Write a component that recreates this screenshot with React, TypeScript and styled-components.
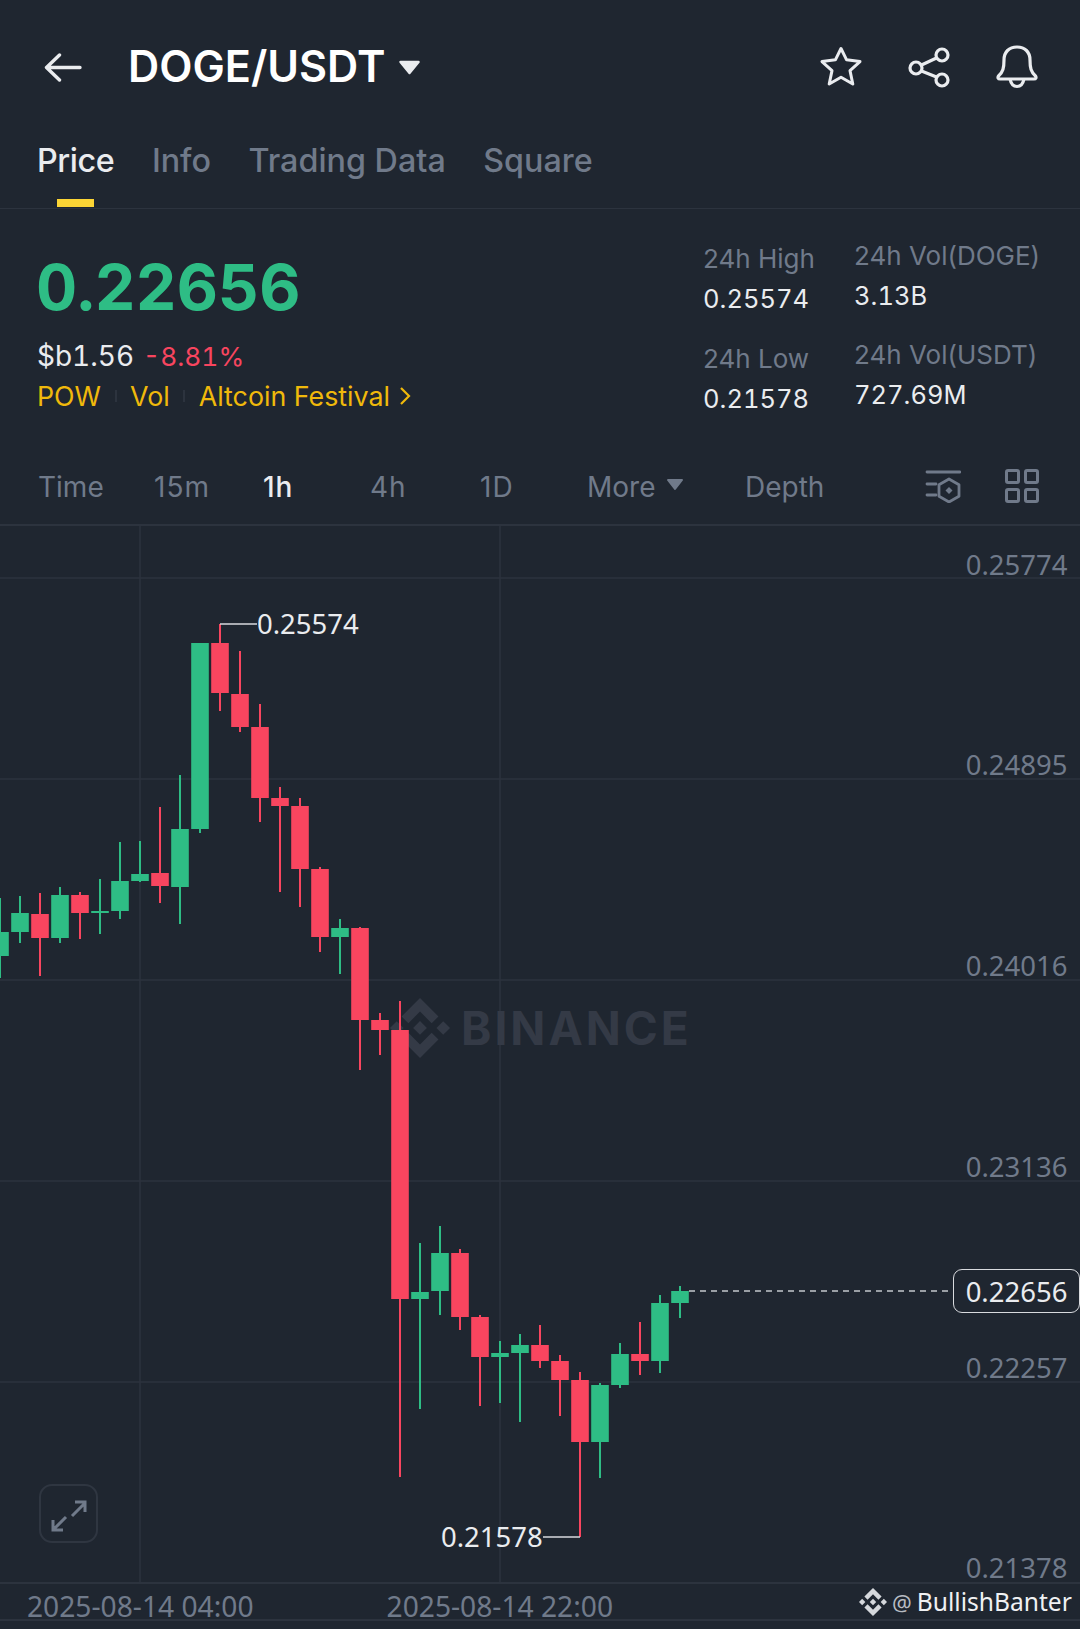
import styled, { createGlobalStyle } from 'styled-components';

const BG = '#1f2630';
const GREEN = '#2ebd85';
const RED = '#f8455f';
const MUTED = '#707a8a';
const LINE = '#2c333e';
const CHART_TOP = 526;

// x, up, high, top, bottom, low (page pixels)
const candles: [number, boolean, number, number, number, number][] = [
  [0, true, 898, 932, 956, 978],
  [20, true, 896, 913, 932, 943],
  [40, false, 893, 914, 938, 976],
  [60, true, 887, 895, 938, 943],
  [80, false, 892, 895, 913, 939],
  [100, true, 879, 911, 913, 934],
  [120, true, 842, 881, 911, 919],
  [140, true, 841, 874, 881, 882],
  [160, false, 807, 873, 886, 903],
  [180, true, 775, 829, 887, 924],
  [200, true, 643, 643, 829, 833],
  [220, false, 624, 643, 693, 711],
  [240, false, 651, 694, 727, 732],
  [260, false, 704, 727, 798, 822],
  [280, false, 787, 798, 806, 892],
  [300, false, 798, 806, 869, 907],
  [320, false, 867, 869, 937, 952],
  [340, true, 919, 928, 937, 974],
  [360, false, 927, 928, 1020, 1070],
  [380, false, 1013, 1020, 1030, 1055],
  [400, false, 1001, 1030, 1299, 1477],
  [420, true, 1243, 1292, 1299, 1409],
  [440, true, 1226, 1253, 1291, 1315],
  [460, false, 1249, 1253, 1317, 1330],
  [480, false, 1315, 1317, 1357, 1406],
  [500, true, 1341, 1353, 1357, 1403],
  [520, true, 1334, 1345, 1353, 1422],
  [540, false, 1325, 1345, 1361, 1368],
  [560, false, 1355, 1361, 1380, 1416],
  [580, false, 1372, 1380, 1442, 1537],
  [600, true, 1383, 1385, 1442, 1478],
  [620, true, 1343, 1354, 1385, 1388],
  [640, false, 1322, 1354, 1361, 1375],
  [660, true, 1295, 1303, 1361, 1373],
  [680, true, 1286, 1291, 1303, 1318],
];

const gridRows = [
  { y: 578, label: '0.25774', labelY: 564 },
  { y: 779, label: '0.24895', labelY: 764 },
  { y: 980, label: '0.24016', labelY: 965 },
  { y: 1181, label: '0.23136', labelY: 1166 },
  { y: 1382, label: '0.22257', labelY: 1367 },
];

const LOGO_PATHS = [
  'M38.73 53.2l24.59-24.58 24.6 24.6 14.3-14.31L63.32 0 24.42 38.9z',
  'M0 63.31l14.3-14.31 14.31 14.31-14.31 14.3z',
  'M38.73 73.41l24.59 24.59 24.6-24.6 14.31 14.29-38.9 38.91-38.91-38.88z',
  'M98 63.31l14.3-14.31 14.31 14.31-14.31 14.3z',
  'M77.83 63.3L63.32 48.78 48.81 63.28l14.51 14.5 14.51-14.47z',
];

function BinanceMark({ size, color }: { size: number; color: string }) {
  return (
    <svg width={size} height={size} viewBox="0 0 126.61 126.61" fill={color}>
      {LOGO_PATHS.map((d) => (
        <path key={d} d={d} />
      ))}
    </svg>
  );
}

function Chart() {
  const py = (y: number) => y - CHART_TOP;
  return (
    <ChartSvg viewBox="0 0 1080 1056" width={1080} height={1056}>
      {gridRows.map((row) => (
        <line key={row.y} x1={0} x2={1080} y1={py(row.y)} y2={py(row.y)} stroke={LINE} strokeWidth={1.5} />
      ))}
      <line x1={140} x2={140} y1={0} y2={1056} stroke={LINE} strokeWidth={1.5} />
      <line x1={500} x2={500} y1={0} y2={1056} stroke={LINE} strokeWidth={1.5} />

      <g transform={`translate(390 ${py(998)})`}>
        <svg width={60} height={60} viewBox="0 0 126.61 126.61" fill="#343a46">
          {LOGO_PATHS.map((d) => (
            <path key={d} d={d} />
          ))}
        </svg>
      </g>
      <Watermark x={461} y={py(1045)}>BINANCE</Watermark>

      {candles.map(([x, up, high, top, bottom, low]) => {
        const color = up ? GREEN : RED;
        return (
          <g key={x} fill={color}>
            <rect x={x - 1} y={py(high)} width={2} height={low - high} />
            <rect x={x - 8.8} y={py(top)} width={17.6} height={bottom - top} />
          </g>
        );
      })}

      <path d={`M220 ${py(624)}H257`} stroke="#d8dade" strokeWidth={1.5} fill="none" />
      <PriceMark x={257} y={py(624) + 10}>0.25574</PriceMark>
      <path d={`M580 ${py(1537)}H543`} stroke="#d8dade" strokeWidth={1.5} fill="none" />
      <PriceMark x={441} y={py(1537) + 10}>0.21578</PriceMark>

      {gridRows.map((row) => (
        <AxisLabel key={row.label} x={1067.5} y={py(row.labelY) + 10.5} textAnchor="end">
          {row.label}
        </AxisLabel>
      ))}
      <AxisLabel x={1067.5} y={py(1567) + 10.5} textAnchor="end">0.21378</AxisLabel>

      <line x1={689} x2={953} y1={py(1291)} y2={py(1291)} stroke="#c4c7cc" strokeWidth={1.5} strokeDasharray="6 5" />
    </ChartSvg>
  );
}

export default function App() {
  return (
    <Page>
      <GlobalStyle />
      <Header>
        <BackIcon width={40} height={30} viewBox="0 0 40 30" fill="none">
          <path d="M37 14.5H4M16.5 2 3.5 14.5 16.5 27" stroke="#eaecef" strokeWidth={3.4} strokeLinecap="round" strokeLinejoin="round" />
        </BackIcon>
        <Title>DOGE/USDT</Title>
        <TitleCaret width={23} height={15} viewBox="0 0 23 15">
          <path d="M2.5 2h18L11.5 13z" fill="#eaecef" stroke="#eaecef" strokeWidth={2.5} strokeLinejoin="round" />
        </TitleCaret>
        <HeaderIcons>
          <svg width={44} height={42} viewBox="0 0 44 42" fill="none" stroke="#eaecef" strokeWidth={3} strokeLinejoin="round">
            <path d="M22 2.5 27.6 13.8 41 15.6 31 24.6 33.8 38 22 31.3 10.2 38 13 24.6 3 15.6 16.4 13.8Z" />
          </svg>
          <svg width={44} height={44} viewBox="0 0 44 44" fill="none" stroke="#eaecef" strokeWidth={3.2}>
            <circle cx={9} cy={23} r={6} />
            <circle cx={35} cy={10} r={6} />
            <circle cx={35} cy={35} r={6} />
            <path d="M14.5 20 29.5 13M14.5 26 29.5 32" />
          </svg>
          <svg width={44} height={46} viewBox="0 0 44 46" fill="none" stroke="#eaecef" strokeWidth={3.2} strokeLinejoin="round">
            <path d="M3.5 32C8 28 9 24 9 16 9 8 14 3 22 3s13 5 13 13c0 8 1 12 5.500 16 1 1.500.5 3-1.500 3H5c-2 0-2.500-1.500-1.500-3Z" />
            <path d="M15 35c1 5 4 7.500 7 7.500s6-2.500 7-7.500" />
          </svg>
        </HeaderIcons>
      </Header>

      <Tabs>
        <Tab $active>Price</Tab>
        <Tab>Info</Tab>
        <Tab>Trading Data</Tab>
        <Tab>Square</Tab>
      </Tabs>

      <Stats>
        <Summary>
          <LastPrice>0.22656</LastPrice>
          <ChangeRow>
            <Fiat>$b1.56</Fiat>
            <Change>-8.81%</Change>
          </ChangeRow>
          <TagRow>
            <span>POW</span>
            <TagDivider />
            <span>Vol</span>
            <TagDivider />
            <span>Altcoin Festival</span>
            <svg width={12} height={20} viewBox="0 0 12 20" fill="none" stroke="#f0b90b" strokeWidth={2.2}>
              <path d="M2 2l8 8-8 8" />
            </svg>
          </TagRow>
        </Summary>
        <StatColumn $left={703} $top={34} $gap={28}>
          <StatPair>
            <StatLabel>24h High</StatLabel>
            <StatValue>0.25574</StatValue>
          </StatPair>
          <StatPair>
            <StatLabel>24h Low</StatLabel>
            <StatValue>0.21578</StatValue>
          </StatPair>
        </StatColumn>
        <StatColumn $left={854} $top={31} $gap={27}>
          <StatPair>
            <StatLabel>24h Vol(DOGE)</StatLabel>
            <StatValue>3.13B</StatValue>
          </StatPair>
          <StatPair>
            <StatLabel>24h Vol(USDT)</StatLabel>
            <StatValue>727.69M</StatValue>
          </StatPair>
        </StatColumn>
      </Stats>

      <Toolbar>
        <Interval>Time</Interval>
        <Interval $numeric>15m</Interval>
        <Interval $numeric $active>1h</Interval>
        <Interval $numeric>4h</Interval>
        <Interval $numeric>1D</Interval>
        <Interval>
          More
          <MoreCaret width={18} height={13} viewBox="0 0 18 13">
            <path d="M2 2h14L9 11z" fill={MUTED} stroke={MUTED} strokeWidth={2} strokeLinejoin="round" />
          </MoreCaret>
        </Interval>
        <Interval>Depth</Interval>
        <ToolIcon width={36} height={34} viewBox="0 0 36 34" fill="none" stroke={MUTED} strokeWidth={2.8} strokeLinecap="round">
          <path d="M2 3h33M2 15h9M2 26h9" />
          <path d="M24 10l10 5.700v11.600L24 33 14 27.300V15.700Z" strokeLinejoin="round" />
          <path d="M24 18l3.500 3.500-3.500 3.500-3.500-3.500Z" fill={MUTED} stroke="none" />
        </ToolIcon>
        <ToolIcon width={34} height={34} viewBox="0 0 34 34" fill="none" stroke={MUTED} strokeWidth={3}>
          <rect x={1.5} y={1.5} width={12} height={12} rx={1.5} />
          <rect x={20.500} y={1.5} width={12} height={12} rx={1.5} />
          <rect x={1.5} y={20.500} width={12} height={12} rx={1.5} />
          <rect x={20.500} y={20.500} width={12} height={12} rx={1.5} />
        </ToolIcon>
      </Toolbar>

      <ChartArea>
        <Chart />
        <CurrentPrice>0.22656</CurrentPrice>
        <ExpandButton>
          <svg width={40} height={40} viewBox="0 0 40 40" fill="none" stroke={MUTED} strokeWidth={3}>
            <path d="M23 22 36 9M26 8h10v10M17 23 4 36M4 26v10h10" />
          </svg>
        </ExpandButton>
      </ChartArea>

      <TimeAxis>
        <span>2025-08-14 04:00</span>
        <span>2025-08-14 22:00</span>
        <Credit>
          <BinanceMark size={28} color="#d5d8dc" />
          <CreditAt>@</CreditAt>
          <span>BullishBanter</span>
        </Credit>
      </TimeAxis>
    </Page>
  );
}

const GlobalStyle = createGlobalStyle`
  html, body {
    margin: 0;
    padding: 0;
    background: ${BG};
  }
`;

const Page = styled.div`
  width: 1080px;
  height: 1629px;
  overflow: hidden;
  background: ${BG};
  font-family: Inter, 'Noto Sans', sans-serif;
  color: #eaecef;
`;

const Header = styled.header`
  height: 134px;
  padding-left: 43px;
  display: flex;
  align-items: center;
  box-sizing: border-box;
`;

const BackIcon = styled.svg`
  margin: 2px 45px 0 0;
`;

const Title = styled.h1`
  margin: -2px 0 0;
  font-size: 43.200px;
  line-height: 50px;
  font-weight: 600;
  color: #fff;
`;

const TitleCaret = styled.svg`
  margin-left: 13px;
`;

const HeaderIcons = styled.div`
  margin-left: auto;
  padding-right: 41px;
  display: flex;
  align-items: center;
  gap: 44px;
`;

const Tabs = styled.nav`
  height: 74.500px;
  box-sizing: border-box;
  padding: 5px 0 0 37px;
  display: flex;
  gap: 37.500px;
  border-bottom: 1.5px solid ${LINE};
`;

const Tab = styled.div<{ $active?: boolean }>`
  position: relative;
  font-size: 32.300px;
  line-height: 44px;
  font-weight: 500;
  letter-spacing: ${({ $active }) => ($active ? '-0.4px' : '0')};
  color: ${({ $active }) => ($active ? '#eaecef' : MUTED)};

  &::after {
    content: '';
    display: ${({ $active }) => ($active ? 'block' : 'none')};
    position: absolute;
    left: 20px;
    top: 60px;
    width: 37px;
    height: 8px;
    background: #fcd535;
  }
`;

const Stats = styled.section`
  position: relative;
  height: 232.500px;
`;

const Summary = styled.div`
  padding: 38px 0 0 36px;
`;

const LastPrice = styled.div`
  font-size: 63.800px;
  line-height: 80px;
  font-weight: 700;
  font-variant-numeric: tabular-nums;
  color: ${GREEN};
`;

const ChangeRow = styled.div`
  margin-top: 12px;
  padding-left: 1px;
  display: flex;
  align-items: baseline;
  gap: 9px;
  font-variant-numeric: tabular-nums;
  line-height: 34px;
`;

const Fiat = styled.span`
  font-size: 28px;
  color: #eaecef;
`;

const Change = styled.span`
  font-size: 26.300px;
  color: ${RED};
`;

const TagRow = styled.div`
  margin-top: 5px;
  padding-left: 1px;
  display: flex;
  align-items: center;
  gap: 13.500px;
  font-size: 26.800px;
  line-height: 34px;
  color: #f0b90b;

  svg {
    margin-left: -5px;
  }
`;

const TagDivider = styled.i`
  width: 2px;
  height: 12px;
  background: ${LINE};
`;

const StatColumn = styled.div<{ $left: number; $top: number; $gap: number }>`
  position: absolute;
  left: ${({ $left }) => $left}px;
  top: ${({ $top }) => $top}px;
  display: flex;
  flex-direction: column;
  gap: ${({ $gap }) => $gap}px;
`;

const StatPair = styled.div`
  display: flex;
  flex-direction: column;
  gap: 8px;
`;

const StatLabel = styled.span`
  font-size: 26px;
  line-height: 32px;
  color: ${MUTED};
`;

const StatValue = styled.span`
  font-size: 25.500px;
  line-height: 32px;
  font-variant-numeric: tabular-nums;
  color: #eaecef;
`;

const Toolbar = styled.div`
  height: 85px;
  box-sizing: border-box;
  padding: 29px 0 0 38px;
  display: grid;
  grid-template-columns: 116px 109px 107px 110px 107px 158px 180px 80px 40px;
  align-items: start;
  border-bottom: 2px solid ${LINE};
`;

const Interval = styled.div<{ $active?: boolean; $numeric?: boolean }>`
  display: flex;
  align-items: center;
  gap: 11px;
  font-size: 28px;
  line-height: 34px;
  letter-spacing: ${({ $numeric }) => ($numeric ? '1px' : '0')};
  font-weight: ${({ $active }) => ($active ? 500 : 400)};
  color: ${({ $active }) => ($active ? '#eaecef' : MUTED)};
`;

const MoreCaret = styled.svg`
  margin-top: -6px;
`;

const ToolIcon = styled.svg`
  margin-top: -1px;
`;

const ChartArea = styled.div`
  position: relative;
  height: 1056px;
`;

const ChartSvg = styled.svg`
  display: block;
  overflow: visible;
`;

const AxisLabel = styled.text`
  font-family: 'Noto Sans', sans-serif;
  font-size: 27.500px;
  fill: ${MUTED};
`;

const PriceMark = styled.text`
  font-family: 'Noto Sans', sans-serif;
  font-size: 27.500px;
  fill: #eaecef;
`;

const Watermark = styled.text`
  font-family: Inter, sans-serif;
  font-size: 46px;
  font-weight: 700;
  letter-spacing: 3px;
  fill: #343a46;
`;

const CurrentPrice = styled.div`
  position: absolute;
  left: 953px;
  top: 743px;
  width: 127px;
  height: 44px;
  box-sizing: border-box;
  border: 1.5px solid #d8dade;
  border-radius: 9px;
  background: ${BG};
  display: flex;
  align-items: center;
  justify-content: center;
  font-family: 'Noto Sans', sans-serif;
  font-size: 27.500px;
  color: #eaecef;
`;

const ExpandButton = styled.div`
  position: absolute;
  left: 39px;
  top: 958px;
  width: 59px;
  height: 59px;
  box-sizing: border-box;
  border: 2px solid #2f3641;
  border-radius: 13px;
  display: flex;
  align-items: center;
  justify-content: center;
`;

const TimeAxis = styled.footer`
  position: relative;
  height: 39px;
  box-sizing: border-box;
  padding: 7px 0 0 27px;
  display: flex;
  gap: 133px;
  border-top: 2px solid ${LINE};
  border-bottom: 2px solid ${LINE};
  font-family: 'Noto Sans', sans-serif;
  font-size: 28.200px;
  line-height: 30px;
  color: ${MUTED};
`;

const Credit = styled.div`
  position: absolute;
  left: 859px;
  top: 3px;
  display: flex;
  align-items: center;
  gap: 5px;
  font-family: 'Noto Sans', sans-serif;
  font-size: 24.600px;
  line-height: 30px;
  color: #f0f1f3;
`;

const CreditAt = styled.span`
  font-size: 22px;
  color: #b8bcc2;
`;
